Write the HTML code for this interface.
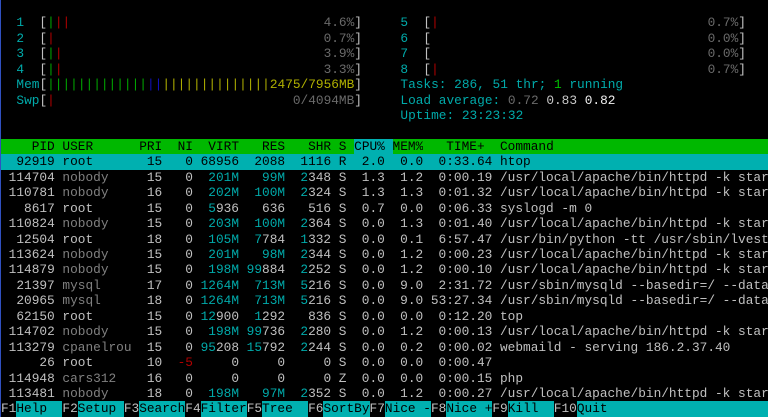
<!DOCTYPE html>
<html><head><meta charset="utf-8"><style>
body{margin:0;background:#000;width:768px;height:417px;overflow:hidden;position:relative;font:12.8px/15.44px "Liberation Mono",monospace;color:#c0c0c0}
.l{position:absolute;height:15.44px;white-space:pre}
.edge{position:absolute;left:0;top:0;width:1px;height:417px;background:#3050c0}
.c{color:#00aaaa}.g{color:#00a800}.r{color:#b00000}.b{color:#1010c0}.y{color:#b0b000}.d{color:#6a6a6a}.w{color:#f0f0f0}.n{color:#808080}.gg{color:#00c000}
.m{display:inline-flex;width:40ch;justify-content:space-between;vertical-align:top}
.row{display:flex;left:1px;width:767px}
.row>span{flex:none;margin-right:1ch;white-space:pre;overflow:hidden}
.p{width:7ch;text-align:right}.u{width:9ch}.pr{width:3ch;text-align:right}.ni{width:3ch;text-align:right}
.v{width:5ch;text-align:right}.s{width:1ch}.cp{width:4ch;text-align:right}.t{width:8ch;text-align:right}
.row>span.cm{margin-right:0;flex:1}
.hdr{background:#00b800;color:#000}
.sel{background:#00b0b0;color:#000}
.sel .c,.sel .n{color:#000}
.fb{left:1px;width:767px;display:flex}
.fb span{white-space:pre;flex:none}
.k{color:#c0c0c0;background:#000}
.lb{background:#00b0b0;color:#000;width:6ch}
</style></head><body>
<div class="edge"></div>

<div class="l" style="top:15.44px;left:16.4px"><span class="c">1</span>  [<span class="m"><span><span class="g">|</span><span class="r">||</span></span><span class="d">4.6%</span></span>]</div>
<div class="l" style="top:30.88px;left:16.4px"><span class="c">2</span>  [<span class="m"><span><span class="r">|</span></span><span class="d">0.7%</span></span>]</div>
<div class="l" style="top:46.32px;left:16.4px"><span class="c">3</span>  [<span class="m"><span><span class="g">|</span><span class="r">|</span></span><span class="d">3.9%</span></span>]</div>
<div class="l" style="top:61.76px;left:16.4px"><span class="c">4</span>  [<span class="m"><span><span class="g">|</span><span class="r">|</span></span><span class="d">3.3%</span></span>]</div>
<div class="l" style="top:77.2px;left:16.4px"><span class="c">Mem</span>[<span class="m"><span><span class="g">|||||||||||||</span><span class="b">||</span><span class="y">||||||||||||||</span></span><span class="y">2475/7956MB</span></span>]</div>
<div class="l" style="top:92.64px;left:16.4px"><span class="c">Swp</span>[<span class="m"><span><span class="r">|</span></span><span class="d">0/4094MB</span></span>]</div>

<div class="l" style="top:15.44px;left:400.4px"><span class="c">5</span>  [<span class="m"><span><span class="r">|</span></span><span class="d">0.7%</span></span>]</div>
<div class="l" style="top:30.88px;left:400.4px"><span class="c">6</span>  [<span class="m"><span></span><span class="d">0.0%</span></span>]</div>
<div class="l" style="top:46.32px;left:400.4px"><span class="c">7</span>  [<span class="m"><span></span><span class="d">0.0%</span></span>]</div>
<div class="l" style="top:61.76px;left:400.4px"><span class="c">8</span>  [<span class="m"><span><span class="r">|</span></span><span class="d">0.7%</span></span>]</div>
<div class="l c" style="top:77.2px;left:400.4px">Tasks: 286, 51 thr; <span class="gg">1</span> running</div>
<div class="l c" style="top:92.64px;left:400.4px">Load average: <span class="d">0.72</span> <span style="color:#c8c8c8">0.83</span> <span class="w">0.82</span></div>
<div class="l c" style="top:108.08px;left:400.4px">Uptime: 23:23:32</div>

<div class="l row hdr" style="top:138.96px"><span class="p">PID</span><span class="u">USER</span><span class="pr">PRI</span><span class="ni">NI</span><span class="v">VIRT</span><span class="v">RES</span><span class="v">SHR</span><span class="s">S</span><span class="cp" style="background:#00b0b0;margin-right:0;width:5ch;text-align:left">CPU%</span><span class="cp">MEM%</span><span class="t">TIME+ </span><span class="cm">Command</span></div>

<div class="l row sel" style="top:154.4px"><span class="p">92919</span><span class="u">root</span><span class="pr">15</span><span class="ni">0</span><span class="v">68956</span><span class="v">2088</span><span class="v">1116</span><span class="s">R</span><span class="cp">2.0</span><span class="cp">0.0</span><span class="t">0:33.64</span><span class="cm">htop</span></div>

<div class="l row" style="top:169.84px"><span class="p">114704</span><span class="u n">nobody</span><span class="pr">15</span><span class="ni">0</span><span class="v c">201M</span><span class="v c">99M</span><span class="v"><span class="c">2</span>348</span><span class="s">S</span><span class="cp">1.3</span><span class="cp">1.2</span><span class="t">0:00.19</span><span class="cm">/usr/local/apache/bin/httpd -k star</span></div>
<div class="l row" style="top:185.28px"><span class="p">110781</span><span class="u n">nobody</span><span class="pr">16</span><span class="ni">0</span><span class="v c">202M</span><span class="v c">100M</span><span class="v"><span class="c">2</span>324</span><span class="s">S</span><span class="cp">1.3</span><span class="cp">1.3</span><span class="t">0:01.32</span><span class="cm">/usr/local/apache/bin/httpd -k star</span></div>
<div class="l row" style="top:200.72px"><span class="p">8617</span><span class="u">root</span><span class="pr">15</span><span class="ni">0</span><span class="v"><span class="c">5</span>936</span><span class="v">636</span><span class="v">516</span><span class="s">S</span><span class="cp">0.7</span><span class="cp">0.0</span><span class="t">0:06.33</span><span class="cm">syslogd -m 0</span></div>
<div class="l row" style="top:216.16px"><span class="p">110824</span><span class="u n">nobody</span><span class="pr">15</span><span class="ni">0</span><span class="v c">203M</span><span class="v c">100M</span><span class="v"><span class="c">2</span>364</span><span class="s">S</span><span class="cp">0.0</span><span class="cp">1.3</span><span class="t">0:01.40</span><span class="cm">/usr/local/apache/bin/httpd -k star</span></div>
<div class="l row" style="top:231.6px"><span class="p">12504</span><span class="u">root</span><span class="pr">18</span><span class="ni">0</span><span class="v c">105M</span><span class="v"><span class="c">7</span>784</span><span class="v"><span class="c">1</span>332</span><span class="s">S</span><span class="cp">0.0</span><span class="cp">0.1</span><span class="t">6:57.47</span><span class="cm">/usr/bin/python -tt /usr/sbin/lvest</span></div>
<div class="l row" style="top:247.04px"><span class="p">113624</span><span class="u n">nobody</span><span class="pr">15</span><span class="ni">0</span><span class="v c">201M</span><span class="v c">98M</span><span class="v"><span class="c">2</span>344</span><span class="s">S</span><span class="cp">0.0</span><span class="cp">1.2</span><span class="t">0:00.23</span><span class="cm">/usr/local/apache/bin/httpd -k star</span></div>
<div class="l row" style="top:262.48px"><span class="p">114879</span><span class="u n">nobody</span><span class="pr">15</span><span class="ni">0</span><span class="v c">198M</span><span class="v"><span class="c">99</span>884</span><span class="v"><span class="c">2</span>252</span><span class="s">S</span><span class="cp">0.0</span><span class="cp">1.2</span><span class="t">0:00.10</span><span class="cm">/usr/local/apache/bin/httpd -k star</span></div>
<div class="l row" style="top:277.92px"><span class="p">21397</span><span class="u n">mysql</span><span class="pr">17</span><span class="ni">0</span><span class="v c">1264M</span><span class="v c">713M</span><span class="v"><span class="c">5</span>216</span><span class="s">S</span><span class="cp">0.0</span><span class="cp">9.0</span><span class="t">2:31.72</span><span class="cm">/usr/sbin/mysqld --basedir=/ --data</span></div>
<div class="l row" style="top:293.36px"><span class="p">20965</span><span class="u n">mysql</span><span class="pr">18</span><span class="ni">0</span><span class="v c">1264M</span><span class="v c">713M</span><span class="v"><span class="c">5</span>216</span><span class="s">S</span><span class="cp">0.0</span><span class="cp">9.0</span><span class="t">53:27.34</span><span class="cm">/usr/sbin/mysqld --basedir=/ --data</span></div>
<div class="l row" style="top:308.8px"><span class="p">62150</span><span class="u">root</span><span class="pr">15</span><span class="ni">0</span><span class="v"><span class="c">12</span>900</span><span class="v"><span class="c">1</span>292</span><span class="v">836</span><span class="s">S</span><span class="cp">0.0</span><span class="cp">0.0</span><span class="t">0:12.20</span><span class="cm">top</span></div>
<div class="l row" style="top:324.24px"><span class="p">114702</span><span class="u n">nobody</span><span class="pr">15</span><span class="ni">0</span><span class="v c">198M</span><span class="v"><span class="c">99</span>736</span><span class="v"><span class="c">2</span>280</span><span class="s">S</span><span class="cp">0.0</span><span class="cp">1.2</span><span class="t">0:00.13</span><span class="cm">/usr/local/apache/bin/httpd -k star</span></div>
<div class="l row" style="top:339.68px"><span class="p">113279</span><span class="u n">cpanelrou</span><span class="pr">15</span><span class="ni">0</span><span class="v"><span class="c">95</span>208</span><span class="v"><span class="c">15</span>792</span><span class="v"><span class="c">2</span>244</span><span class="s">S</span><span class="cp">0.0</span><span class="cp">0.2</span><span class="t">0:00.02</span><span class="cm">webmaild - serving 186.2.37.40</span></div>
<div class="l row" style="top:355.12px"><span class="p">26</span><span class="u">root</span><span class="pr">10</span><span class="ni r">-5</span><span class="v">0</span><span class="v">0</span><span class="v">0</span><span class="s">S</span><span class="cp">0.0</span><span class="cp">0.0</span><span class="t">0:00.47</span><span class="cm"></span></div>
<div class="l row" style="top:370.56px"><span class="p">114948</span><span class="u n">cars312</span><span class="pr">16</span><span class="ni">0</span><span class="v">0</span><span class="v">0</span><span class="v">0</span><span class="s">Z</span><span class="cp">0.0</span><span class="cp">0.0</span><span class="t">0:00.15</span><span class="cm">php</span></div>
<div class="l row" style="top:386px"><span class="p">113481</span><span class="u n">nobody</span><span class="pr">18</span><span class="ni">0</span><span class="v c">198M</span><span class="v c">97M</span><span class="v"><span class="c">2</span>352</span><span class="s">S</span><span class="cp">0.0</span><span class="cp">1.2</span><span class="t">0:00.27</span><span class="cm">/usr/local/apache/bin/httpd -k star</span></div>

<div class="l fb" style="top:401.44px"><span class="k">F1</span><span class="lb">Help  </span><span class="k">F2</span><span class="lb">Setup </span><span class="k">F3</span><span class="lb">Search</span><span class="k">F4</span><span class="lb">Filter</span><span class="k">F5</span><span class="lb">Tree  </span><span class="k">F6</span><span class="lb">SortBy</span><span class="k">F7</span><span class="lb">Nice -</span><span class="k">F8</span><span class="lb">Nice +</span><span class="k">F9</span><span class="lb">Kill  </span><span class="k">F10</span><span class="lb" style="flex:1;width:auto">Quit</span></div>
</body></html>
